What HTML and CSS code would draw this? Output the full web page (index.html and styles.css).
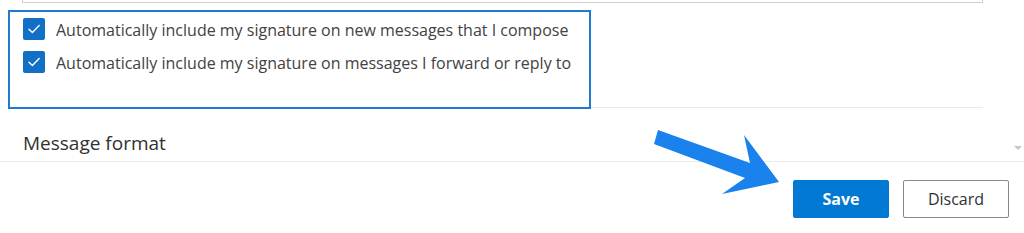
FILE: index.html
```html
<!DOCTYPE html>
<html lang="en">
<head>
<meta charset="utf-8">
<title>Signature settings</title>
<link rel="stylesheet" href="styles.css">
</head>
<body>
<div class="page">
  <div class="pane">
    <div class="editor-edge"></div>
    <div class="options">
      <label class="option">
        <span class="check"><svg viewBox="0 0 22 22" width="22" height="22"><path d="M6 11.2 L9.4 14.6 L16.2 7.6" fill="none" stroke="#fff" stroke-width="1.4" stroke-linecap="round" stroke-linejoin="round"/></svg></span>
        <span class="option-text">Automatically include my signature on new messages that I compose</span>
      </label>
      <label class="option">
        <span class="check"><svg viewBox="0 0 22 22" width="22" height="22"><path d="M6 11.2 L9.4 14.6 L16.2 7.6" fill="none" stroke="#fff" stroke-width="1.4" stroke-linecap="round" stroke-linejoin="round"/></svg></span>
        <span class="option-text">Automatically include my signature on messages I forward or reply to</span>
      </label>
    </div>
    <h2 class="section-title">Message format</h2>
  </div>
  <div class="footer">
    <button class="btn btn-primary" type="button">Save</button>
    <button class="btn btn-secondary" type="button">Discard</button>
  </div>
  <div class="highlight"></div>
  <svg class="callout-arrow" width="140" height="80" viewBox="0 0 140 80">
    <polygon points="13,10 105,43 99,15 134,62 77,74 100,58 9,24" fill="#1a82ec"/>
  </svg>
  <span class="scroll-down"></span>
</div>
</body>
</html>
```
FILE: styles.css
```css
* { box-sizing: border-box; }
html, body {
  margin: 0;
  padding: 0;
  background: #ffffff;
}
body {
  font-family: "Open Sans", "Noto Sans", "Liberation Sans", sans-serif;
  color: #3b3a39;
}
.page {
  position: relative;
  width: 1024px;
  height: 233px;
  overflow: hidden;
}
.pane {
  margin-left: 22px;
  width: 961px;
}
.editor-edge {
  height: 3px;
  border: 1px solid #d2d0ce;
  border-top: none;
}
.options {
  display: flex;
  flex-direction: column;
  gap: 11px;
  padding-top: 15px;
  height: 105px;
  border-bottom: 1px solid #edebe9;
}
.option {
  display: flex;
  align-items: center;
  gap: 11px;
  height: 22px;
  padding-left: 1px;
}
.check {
  width: 22px;
  height: 22px;
  border-radius: 2px;
  background: #1270c4;
  display: block;
  flex: none;
}
.check svg { display: block; }
.option-text {
  font-size: 16px;
  color: #424242;
  white-space: nowrap;
  position: relative;
  top: 1px;
}
.section-title {
  margin: 0;
  padding-left: 1px;
  height: 53px;
  display: flex;
  align-items: center;
  padding-top: 16px;
  font-size: 19px;
  font-weight: 500;
  color: #323130;
}
.footer {
  border-top: 1px solid #edebe9;
  display: flex;
  justify-content: flex-end;
  gap: 14px;
  padding: 18px 15px 0 0;
}
.btn {
  font-family: "Open Sans", "Noto Sans", "Liberation Sans", sans-serif;
  font-size: 16px;
  height: 38px;
  border-radius: 2px;
  padding: 0;
  cursor: pointer;
}
.btn-primary {
  width: 96px;
  background: #0078d4;
  border: 1px solid #0078d4;
  color: #ffffff;
  font-weight: 700;
}
.btn-secondary {
  width: 106px;
  background: #ffffff;
  border: 1px solid #8a8886;
  color: #323130;
  font-weight: 400;
}
.highlight {
  position: absolute;
  left: 8px;
  top: 10px;
  width: 583px;
  height: 99px;
  border: 2px solid #1f7ad1;
  pointer-events: none;
}
.callout-arrow {
  position: absolute;
  left: 645px;
  top: 120px;
}
.scroll-down {
  position: absolute;
  left: 1014px;
  top: 146px;
  width: 0;
  height: 0;
  border-left: 4px solid transparent;
  border-right: 4px solid transparent;
  border-top: 4px solid #c8c6c4;
}
```
